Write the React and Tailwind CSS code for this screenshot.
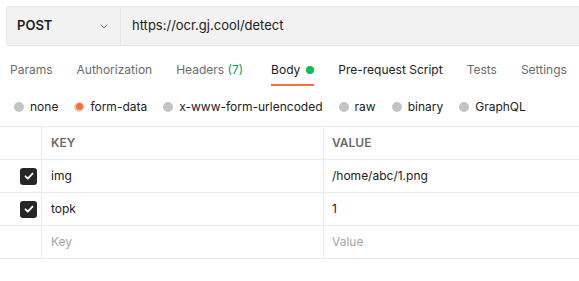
function Radio({ label, checked }) {
  return (
    <div className="flex items-center gap-[6px] whitespace-nowrap">
      {checked ? (
        <span className="flex h-[10px] w-[10px] items-center justify-center rounded-full bg-[#d4d4d4]">
          <span className="h-[7px] w-[7px] rounded-full bg-[#ff6c37]" />
        </span>
      ) : (
        <span className="h-[10px] w-[10px] rounded-full bg-[#c4c4c4]" />
      )}
      <span className="text-[12px] text-[#212121]">{label}</span>
    </div>
  )
}

function Check() {
  return (
    <span className="flex h-[17px] w-[17px] items-center justify-center rounded-[3px] bg-[#262626]">
      <svg viewBox="0 0 12 12" className="h-[12px] w-[12px]" fill="none" aria-hidden="true">
        <path d="M2.5 6.3l2.3 2.3 4.7-5" stroke="#fff" strokeWidth="1.9" strokeLinecap="round" strokeLinejoin="round" />
      </svg>
    </span>
  )
}

function Row({ checked, keyText, value, placeholder }) {
  const textColor = placeholder ? 'text-[#a6a6a6]' : 'text-[#212121]'
  return (
    <div className="flex h-[33px] border-b border-[#ebebeb]">
      <div className="flex w-[42px] shrink-0 items-center justify-end border-r border-[#ebebeb] pr-[4px]">
        {checked ? <Check /> : null}
      </div>
      <div className={`flex w-[282px] shrink-0 items-center border-r border-[#ebebeb] pl-[9px] text-[12px] ${textColor}`}>
        {keyText}
      </div>
      <div className={`flex flex-1 items-center pl-[8px] text-[12px] ${textColor}`}>{value}</div>
    </div>
  )
}

export default function App() {
  const tabs = [
    { label: 'Params' },
    { label: 'Authorization' },
    { label: 'Headers', count: '(7)' },
    { label: 'Body', active: true, dot: true },
    { label: 'Pre-request Script', strong: true },
    { label: 'Tests' },
    { label: 'Settings' },
  ]

  return (
    <div className="h-[281px] w-[579px] overflow-hidden bg-white font-['Inter',sans-serif]">
      <div className="pl-[6px] pt-[6px]">
        <div className="flex h-[40px] rounded-l-[4px] border border-r-0 border-[#e6e6e6] bg-[#f2f2f2]">
          <div className="flex w-[114px] shrink-0 items-center justify-between border-r border-[#e6e6e6] pl-[10px] pr-[12px]">
            <span className="text-[13px] font-semibold text-[#212121]">POST</span>
            <svg viewBox="0 0 8 5" className="h-[5px] w-[8px]" fill="none" aria-hidden="true">
              <path d="M0.5 0.5L4 4l3.5-3.5" stroke="#7a7a7a" strokeWidth="1" />
            </svg>
          </div>
          <div className="flex items-center pl-[11px] text-[13px] text-[#212121]">https://ocr.gj.cool/detect</div>
        </div>
      </div>

      <div className="mt-[10px] flex h-[30px] gap-[24px] whitespace-nowrap pl-[10px]">
        {tabs.map((tab) => (
          <div
            key={tab.label}
            className={`flex items-center gap-[6px] border-b-2 text-[12px] ${
              tab.active ? 'ml-[4px] border-[#ff6c37]' : 'border-transparent'
            } ${tab.active || tab.strong ? 'text-[#212121]' : 'text-[#6b6b6b]'}`}
          >
            <span>
              {tab.label}
              {tab.count ? <span className="text-[#0a9a5c]"> {tab.count}</span> : null}
            </span>
            {tab.dot ? <span className="h-[8px] w-[8px] rounded-full bg-[#0cbb52]" /> : null}
          </div>
        ))}
      </div>

      <div className="mt-[10px] flex h-[21px] items-center gap-[16px] pl-[14px]">
        <Radio label="none" />
        <Radio label="form-data" checked />
        <Radio label="x-www-form-urlencoded" />
        <Radio label="raw" />
        <Radio label="binary" />
        <Radio label="GraphQL" />
      </div>

      <div className="mt-[9px] border-t border-[#ebebeb]">
        <div className="flex h-[33px] border-b border-[#ebebeb]">
          <div className="w-[42px] shrink-0 border-r border-[#ebebeb]" />
          <div className="flex w-[282px] shrink-0 items-center border-r border-[#ebebeb] pl-[9px] text-[12px] font-semibold text-[#6b6b6b]">
            KEY
          </div>
          <div className="flex flex-1 items-center pl-[8px] text-[12px] font-semibold text-[#6b6b6b]">VALUE</div>
        </div>
        <Row checked keyText="img" value="/home/abc/1.png" />
        <Row checked keyText="topk" value="1" />
        <Row keyText="Key" value="Value" placeholder />
      </div>
    </div>
  )
}
